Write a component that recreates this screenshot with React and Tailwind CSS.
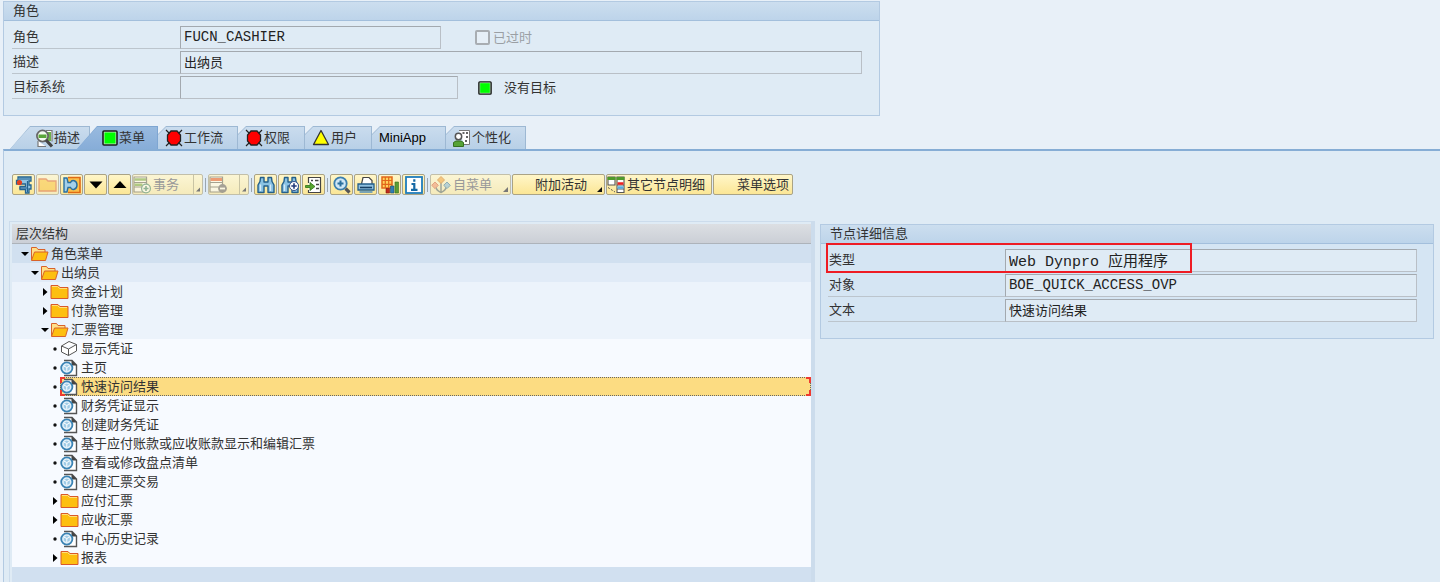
import React, { useState } from "react";
import clsx from "clsx";

// ---------- icons ----------

const Svg = ({ w = 18, h = 18, children }) => (
  <svg width={w} height={h} viewBox={`0 0 ${w} ${h}`} className="shrink-0" aria-hidden="true">
    {children}
  </svg>
);

const FolderOpen = () => (
  <Svg w={19} h={16}>
    <path d="M1.500 14V1.500h5l1.500 2h7v3" fill="#ffe08a" stroke="#d8622a" />
    <path d="M1.500 14.500 4.500 6h13.500L15.500 14.500z" fill="#fdbf10" stroke="#d8622a" />
  </Svg>
);

const FolderClosed = () => (
  <Svg w={19} h={16}>
    <path d="M1 14.500V1.500h7l2 2h8v11z" fill="#fdbf10" stroke="#d9592b" />
    <path d="M2 2.500h5.500l2 2H17" fill="none" stroke="#ffdf7e" />
  </Svg>
);

const CubeIcon = () => (
  <Svg w={19} h={17}>
    <path
      d="M1.500 6 9 1.500l7.500 3v6.500L8.500 15.500 1.500 12zM1.500 6l7 3 8-4.500M8.500 9v6.500"
      fill="#fff"
      stroke="#555"
      strokeLinejoin="round"
    />
  </Svg>
);

const WebDoc = () => (
  <Svg w={19} h={18}>
    <path d="M4 1.500h8l4.500 4.500v10.500H4" fill="#fff" stroke="#555" strokeWidth="1.400" />
    <path d="M11.500 1v5.500H17z" fill="#444" />
    <circle cx="6.800" cy="9" r="5.600" fill="#e4f1fa" stroke="#3a83b4" strokeWidth="1.800" />
    <path d="M3.800 7 6.800 5.500l3 1.500v3.500l-3 2-3-2z" fill="#9fcbe6" />
    <path d="M3.800 7l3 1.500 3-1.500M6.800 8.500v4" stroke="#fff" fill="none" />
  </Svg>
);

const GreenSquare = ({ size = 16 }) => (
  <svg width={size} height={size} viewBox="0 0 16 16" className="shrink-0" aria-hidden="true">
    <rect x="1" y="1" width="14" height="14" rx="1" fill="#bfe8bf" stroke="#1c1c1c" strokeWidth="1.600" />
    <rect x="2.500" y="2.500" width="11" height="11" fill="#0f0" />
  </svg>
);

const RedLight = () => (
  <Svg>
    <path d="M1 1l4 4M17 1l-4 4M1 17l4-4M17 17l-4-4" stroke="#222" strokeWidth="1.200" />
    <path d="M6 2h6l3.500 4v6L12 16H6l-3.500-4V6z" fill="red" stroke="#222" strokeWidth="1.300" />
  </Svg>
);

const YellowTriangle = () => (
  <Svg>
    <path d="M9 1.500 16.500 15.500h-15z" fill="#ff0" stroke="#333" strokeWidth="1.300" strokeLinejoin="round" />
  </Svg>
);

const DocSearch = () => (
  <Svg w={19} h={19}>
    <path d="M11 1.500h6v11M3 12v5.500h8" fill="#fff" stroke="#777" strokeWidth="1.200" />
    <path d="M12 3h4v9h-4z" fill="#6db04a" />
    <circle cx="7.500" cy="7" r="5.600" fill="#f4faf0" stroke="#666" strokeWidth="1.700" />
    <path d="M3.500 5.500h8v3.500h-8z" fill="#5aa63a" />
    <path d="M11 11l6 6.500" stroke="#444" strokeWidth="3.200" />
  </Svg>
);

const Personal = () => (
  <Svg>
    <path d="M6 1.500h10.500v14H11" fill="#fff" stroke="#777" />
    <path d="M9.500 4h2M13 4h2M13 8h2M12 12h2" stroke="#333" strokeWidth="1.600" />
    <circle cx="5.500" cy="7.500" r="3.200" fill="#fff" stroke="#555" strokeWidth="1.500" />
    <path d="M.5 17.500V13.500l2.500-1.500h5l2.500 1.500v4z" fill="#56a336" stroke="#35701f" />
  </Svg>
);

const RoleIcon = () => (
  <Svg>
    <path
      d="M3 1h13v4h-2v4h2v4h-2v4h-3.500v-3.500H5v-3h5.500V8H1.500V4.500H3z"
      fill="#8fc3e3"
      stroke="#24638f"
      strokeWidth="1.300"
    />
    <path d="M4 3h11M4 12h9M12.500 5v11" stroke="#24638f" strokeWidth="1.200" />
    <circle cx="4.500" cy="6.500" r="2.600" fill="#e0401f" />
  </Svg>
);

const PuzzleIcon = () => (
  <Svg>
    <path d="M5 1.500h12v15H5" fill="#fbc04a" stroke="#e06a14" strokeWidth="1.600" />
    <path
      d="M1 2h3l1 4.500h2.500c1.500-3.500 6.500-2 6.500 2.500s-5 6-6.500 2.500H5L4 16H1z"
      fill="#a4d0ea"
      stroke="#2a6f9e"
      strokeWidth="1.400"
    />
  </Svg>
);

const InsertRow = () => (
  <Svg>
    <path d="M1 1h12.500v15H1zM1 6.500h12M1 11h12" fill="#fff" stroke="#555" strokeWidth="1.200" />
    <path d="M1.500 3.500h11.500M1.500 8.800h8" stroke="#6aa13c" strokeWidth="2.500" />
    <circle cx="13" cy="12.500" r="4.400" fill="#fff" stroke="#2d7a66" strokeWidth="1.200" />
    <path d="M10.500 12.500h5M13 10v5" stroke="#2d7a66" strokeWidth="1.600" />
  </Svg>
);

const DeleteRow = () => (
  <Svg>
    <path d="M1 1h12.500v15H1zM1 6.500h12M1 11h12" fill="#fff" stroke="#555" strokeWidth="1.200" />
    <path d="M1.500 3.500h11.500" stroke="#e0481c" strokeWidth="3" />
    <circle cx="13.500" cy="12.500" r="4.400" fill="#556" />
    <path d="M11 12.500h5" stroke="#fff" strokeWidth="1.800" />
  </Svg>
);

const binocularPath =
  "M3.500 1.500h3.500V6h4V1.500h3.500l.5 4 2 3.500v7.500h-6V10h-4v6.500H1V9l2-3.500z";

const Find = () => (
  <Svg>
    <path d={binocularPath} fill="#8ac2e3" stroke="#245f8a" strokeWidth="1.400" strokeLinejoin="round" />
    <path d="M3.500 8.500V15M13.500 8.500V15" stroke="#d6ebf7" strokeWidth="1.300" />
  </Svg>
);

const FindNext = () => (
  <Svg>
    <path d={binocularPath} fill="#8ac2e3" stroke="#245f8a" strokeWidth="1.400" strokeLinejoin="round" />
    <path d="M3.500 8.500V15" stroke="#d6ebf7" strokeWidth="1.300" />
    <circle cx="13" cy="10" r="4.500" fill="#fff" stroke="#33518a" />
    <path d="M10.300 10h5.400M13 7.300v5.400" stroke="#233c7a" strokeWidth="1.600" />
  </Svg>
);

const Goto = () => (
  <Svg>
    <path d="M3.500 7V1.500h12v15h-12V14" fill="#fff" stroke="#444" strokeWidth="1.200" />
    <path d="M6 4.500h2M10 4.500h3.500M11 8.500h3M11 12.500h3" stroke="#444" strokeWidth="1.300" />
    <path d="M.5 9.500H5v-3l5 4-5 4v-3H.5z" fill="#57a52f" stroke="#2f7415" strokeWidth=".8" />
  </Svg>
);

const ZoomPlus = () => (
  <Svg>
    <circle cx="7.500" cy="7.500" r="6.200" fill="#cfe6f5" stroke="#3c7fae" strokeWidth="1.800" />
    <path d="M4.500 7.500h6M7.500 4.500v6" stroke="#2a6f9e" strokeWidth="2" />
    <path d="M12.500 12.500l4 4" stroke="#555" strokeWidth="3.200" />
  </Svg>
);

const PrinterIcon = () => (
  <Svg>
    <path d="M4.500 8 6 1.500h6L15 4.500V8" fill="#fff" stroke="#444" strokeWidth="1.200" />
    <path d="M1 8h16v6H1z" fill="#8fc0e0" stroke="#245f8a" strokeWidth="1.300" />
    <path d="M3 11.500h12" stroke="#173f63" strokeWidth="1.600" />
    <path d="M2.500 16h13" stroke="#5b93bb" strokeWidth="1.600" />
  </Svg>
);

const GraphIcon = () => (
  <Svg>
    <path d="M1 1h10v11H1z" fill="#ffd25a" stroke="#e2661a" strokeWidth="1.500" />
    <path d="M1 4.500h10M1 8.300h10M4.300 1v11M7.700 1v11" stroke="#e2661a" strokeWidth="1.200" />
    <path d="M5 12.500h3.500V17H5z" fill="#c02a1c" stroke="#7f170d" strokeWidth=".6" />
    <path d="M9.500 10h3.500v7H9.500z" fill="#2f7db3" stroke="#174d75" strokeWidth=".6" />
    <path d="M14 6h3.500v11H14z" fill="#5a9c34" stroke="#35701f" strokeWidth=".6" />
  </Svg>
);

const InfoIcon = () => (
  <Svg>
    <rect x="1" y="1" width="16" height="16" fill="#fff" stroke="#1f7dbd" strokeWidth="1.800" />
    <path d="M9.300 3.300v2.500M6.500 8h2.800v5.500M6 13.800h6.500" stroke="#1669a5" strokeWidth="2.200" fill="none" />
  </Svg>
);

const SelfMenu = () => (
  <Svg w={20} h={18}>
    <path d="M10 5v11M5 11c0 3 2 4 5 5.500 3-1.500 5-2.500 5-5.500" fill="none" stroke="#4a5f70" strokeWidth="1.500" />
    <path d="M10 .5 13.500 4 10 7.500 6.500 4z" fill="#f09a30" stroke="#c86a10" />
    <path d="M4 6l3.300 3.300L4 12.600.7 9.300z" fill="#f08a6a" stroke="#d05a3a" />
    <path d="M16 6l3.300 3.300-3.300 3.300-3.300-3.300z" fill="#7ab4e0" stroke="#2a6f9e" />
  </Svg>
);

const NodeDetail = () => (
  <Svg>
    <path d="M1 1h7v8H1zM10 1h7v15.500h-7zM10 9h7M10 13h7" fill="#fff" stroke="#555" strokeWidth="1.100" />
    <path d="M.5 2.500H8.500M9.500 2.500h8" stroke="#4f9a2a" strokeWidth="3" />
    <path d="M10.500 7.500h6" stroke="#f02020" strokeWidth="2.500" />
    <path d="M10.500 11.500h6" stroke="#58aee0" strokeWidth="2.500" />
    <path d="M1 11.500l7 4.500" stroke="#555" strokeDasharray="2 1.500" />
  </Svg>
);

const Down = () => (
  <Svg>
    <path d="M2.500 5.500h13L9 12.500z" fill="#000" />
  </Svg>
);

const Up = () => (
  <Svg>
    <path d="M2.500 12h13L9 5z" fill="#000" />
  </Svg>
);

const ButtonFolder = () => (
  <Svg w={19} h={16}>
    <path d="M1 14V2h7l2 2h8v10z" fill="#fbc02c" stroke="#d9592b" strokeWidth="1.300" />
  </Svg>
);

// ---------- form pieces ----------

const fieldClass =
  "h-[23px] min-w-0 border border-[#b9bfc6] border-t-[#a3a9af] border-l-[#a3a9af] bg-[#dfebf5] px-[3px] pb-[2px] text-[#222] outline-none";

const monoClass = "font-['Liberation_Mono','Noto_Sans_CJK_SC',monospace]";

const Label = ({ id, wide, children }) => (
  <label
    htmlFor={id}
    className={clsx(
      "flex h-[23px] shrink-0 items-center border-b border-[#bcc5cd] pl-px",
      wide ? "w-[177px]" : "w-[168px]"
    )}
  >
    {children}
  </label>
);

const GroupTitle = ({ children }) => (
  <h2 className="flex h-[19px] items-center border-b border-[#a3bfdc] bg-linear-to-b from-[#ccdeef] to-[#bdd4ea] pl-[9px]">
    {children}
  </h2>
);

// ---------- tabs ----------

const tabs = [
  { id: "desc", label: "描述", icon: <DocSearch />, width: "w-[80px]", first: true },
  { id: "menu", label: "菜单", icon: <GreenSquare />, width: "w-[81px]" },
  { id: "workflow", label: "工作流", icon: <RedLight />, width: "w-[80px]" },
  { id: "auth", label: "权限", icon: <RedLight />, width: "w-[67px]" },
  { id: "user", label: "用户", icon: <YellowTriangle />, width: "w-[67px]" },
  { id: "miniapp", label: "MiniApp", width: "w-[74px]" },
  { id: "personal", label: "个性化", icon: <Personal />, width: "w-[80px]" },
];

const Tab = ({ tab, active, onSelect }) => {
  const slope =
    tab.first || active
      ? "[clip-path:polygon(20px_0,100%_0,100%_100%,0_100%)]"
      : "[clip-path:polygon(8px_0,100%_0,100%_100%,0_100%,0_8px)]";

  return (
    <button
      type="button"
      role="tab"
      aria-selected={active}
      onClick={() => onSelect(tab.id)}
      className={clsx(
        "h-[23px] shrink-0 pt-px pr-px",
        tab.width,
        slope,
        active ? "relative -ml-[13px] bg-[#7ea6d2]" : "bg-[#9db8d3]"
      )}
    >
      <span
        className={clsx(
          "flex h-full items-center",
          slope,
          tab.first || active ? "pl-[25px]" : "pl-[7px]",
          !tab.first && "gap-px",
          active
            ? "bg-linear-to-b from-[#98badf] to-[#87add8]"
            : "bg-linear-to-b from-[#cadcee] to-[#b8d0e7]"
        )}
      >
        {tab.icon}
        <span className={clsx(!tab.icon && "text-black")}>{tab.label}</span>
      </span>
    </button>
  );
};

// ---------- toolbar ----------

const ToolButton = ({ icon, label, title, width = "w-[23px]", split, menu, disabled, end }) => (
  <button
    type="button"
    title={title}
    aria-label={title}
    disabled={disabled}
    className={clsx(
      "flex h-[21px] shrink-0 rounded-xs border bg-linear-to-b",
      disabled
        ? "border-[#c2bfa9] from-[#fbf5d4] to-[#f5ebbb] text-[#999]"
        : "border-[#aaa385] from-[#fff6c8] to-[#fbe695] text-[#333]",
      width
    )}
  >
    <span
      className={clsx(
        "flex h-full flex-1 items-center gap-[2px]",
        !label && !split && "justify-center",
        end && "justify-end",
        end && (menu ? "pr-2" : "pr-[3px]")
      )}
    >
      {icon && <span className={clsx(disabled && "opacity-50")}>{icon}</span>}
      {label && <span className="whitespace-nowrap">{label}</span>}
    </span>
    {(split || menu) && (
      <span
        className={clsx(
          "flex h-full w-[9px] items-end justify-end p-[2px]",
          split && "border-l border-[#c9c4a4]"
        )}
      >
        <svg width="5" height="5" viewBox="0 0 5 5" aria-hidden="true">
          <path d="M5 0v5H0z" fill={disabled ? "#777" : "#111"} />
        </svg>
      </span>
    )}
  </button>
);

const Separator = () => <span className="mx-px h-[14px] w-px shrink-0 bg-[#9aa5b0]" />;

const Toolbar = () => (
  <div role="toolbar" className="flex items-center gap-px">
    <ToolButton title="分配角色" icon={<RoleIcon />} />
    <ToolButton title="创建文件夹" icon={<ButtonFolder />} disabled />
    <ToolButton title="组合" icon={<PuzzleIcon />} />
    <ToolButton title="下移" icon={<Down />} />
    <ToolButton title="上移" icon={<Up />} />
    <ToolButton title="添加事务" icon={<InsertRow />} label="事务" width="w-[71px]" split disabled />
    <Separator />
    <ToolButton title="删除节点" icon={<DeleteRow />} width="w-[41px]" split disabled />
    <Separator />
    <ToolButton title="查找" icon={<Find />} />
    <ToolButton title="查找下一个" icon={<FindNext />} />
    <ToolButton title="转到" icon={<Goto />} />
    <Separator />
    <ToolButton title="详细" icon={<ZoomPlus />} />
    <ToolButton title="打印" icon={<PrinterIcon />} />
    <ToolButton title="图形" icon={<GraphIcon />} />
    <ToolButton title="信息" icon={<InfoIcon />} />
    <Separator />
    <ToolButton icon={<SelfMenu />} label="自菜单" width="w-[81px]" menu disabled />
    <ToolButton label="附加活动" width="w-[93px]" menu end />
    <ToolButton icon={<NodeDetail />} label="其它节点明细" width="w-[106px]" />
    <ToolButton label="菜单选项" width="w-[80px]" end />
  </div>
);

// ---------- tree ----------

const nodes = [
  { level: 0, type: "open", text: "角色菜单" },
  { level: 1, type: "open", text: "出纳员" },
  { level: 2, type: "closed", text: "资金计划" },
  { level: 2, type: "closed", text: "付款管理" },
  { level: 2, type: "open", text: "汇票管理" },
  { level: 3, type: "cube", text: "显示凭证" },
  { level: 3, type: "web", text: "主页" },
  { level: 3, type: "web", text: "快速访问结果" },
  { level: 3, type: "web", text: "财务凭证显示" },
  { level: 3, type: "web", text: "创建财务凭证" },
  { level: 3, type: "web", text: "基于应付账款或应收账款显示和编辑汇票" },
  { level: 3, type: "web", text: "查看或修改盘点清单" },
  { level: 3, type: "web", text: "创建汇票交易" },
  { level: 3, type: "closed", text: "应付汇票" },
  { level: 3, type: "closed", text: "应收汇票" },
  { level: 3, type: "web", text: "中心历史记录" },
  { level: 3, type: "closed", text: "报表" },
];

const levelBg = ["bg-[#d1e0f0]", "bg-[#e1ebf7]", "bg-[#ecf3fb]", "bg-[#f7faff]"];

const nodeIcons = {
  open: <FolderOpen />,
  closed: <FolderClosed />,
  cube: <CubeIcon />,
  web: <WebDoc />,
};

const Marker = ({ type }) => (
  <svg width="10" height="10" viewBox="0 0 10 10" className="shrink-0" aria-hidden="true">
    {type === "open" && <path d="M1 3h8L5 7z" fill="#000" />}
    {type === "closed" && <path d="M3 1v8l4.500-4z" fill="#000" />}
    {(type === "cube" || type === "web") && <circle cx="5" cy="5" r="1.700" fill="#111" />}
  </svg>
);

const Corners = () => (
  <>
    <span className="absolute top-0 left-0 h-[6px] w-[5px] border-t-2 border-l-2 border-[#ee3a30]" />
    <span className="absolute bottom-0 left-0 h-[6px] w-[5px] border-b-2 border-l-2 border-[#ee3a30]" />
    <span className="absolute top-0 right-0 h-[6px] w-[5px] border-t-2 border-r-2 border-[#ee3a30]" />
    <span className="absolute right-0 bottom-0 h-[6px] w-[5px] border-r-2 border-b-2 border-[#ee3a30]" />
  </>
);

const TreeRow = ({ node, selected, onSelect }) => (
  <li
    role="treeitem"
    aria-selected={selected}
    onClick={onSelect}
    className={clsx("flex h-[19px] cursor-default items-center", levelBg[node.level])}
    style={{ paddingLeft: 8 + node.level * 10 }}
  >
    <Marker type={node.type} />
    <span
      className={clsx(
        "relative flex h-[19px] flex-1 items-center gap-[2px]",
        selected && "bg-[#fcdc82] outline-1 -outline-offset-1 outline-dotted outline-[#666]"
      )}
    >
      {nodeIcons[node.type]}
      <span className="whitespace-nowrap">{node.text}</span>
      {selected && <Corners />}
    </span>
  </li>
);

// ---------- page ----------

export default function App() {
  const [activeTab, setActiveTab] = useState("menu");
  const [selected, setSelected] = useState(7);

  return (
    <div className="flex min-h-screen flex-col bg-[#e8f0f8] pt-px pl-[3px] font-['Liberation_Sans','Noto_Sans_CJK_SC',sans-serif] text-[13px] leading-[18px] text-[#333]">
      <section className="w-[61%] border border-[#b3cae2] bg-[#dfebf5] pb-[16px]">
        <GroupTitle>角色</GroupTitle>
        <div className="flex flex-col gap-[2px] pt-[5px] pr-[17px] pl-2">
          <div className="flex items-center">
            <Label id="role">角色</Label>
            <input
              id="role"
              readOnly
              defaultValue="FUCN_CASHIER"
              className={clsx(fieldClass, monoClass, "w-[261px] text-sm")}
            />
            <label className="ml-[34px] flex items-center gap-[3px] text-[#9a9fa4]">
              <input
                type="checkbox"
                disabled
                className="size-[15px] appearance-none rounded-xs border-2 border-[#a8adb2] bg-[#e6eff7]"
              />
              已过时
            </label>
          </div>
          <div className="flex items-center">
            <Label id="description">描述</Label>
            <input id="description" readOnly defaultValue="出纳员" className={clsx(fieldClass, "flex-1")} />
          </div>
          <div className="flex items-center">
            <Label id="target">目标系统</Label>
            <input id="target" readOnly defaultValue="" className={clsx(fieldClass, "w-[278px]")} />
            <span className="ml-5 flex items-center gap-3">
              <GreenSquare size={14} />
              没有目标
            </span>
          </div>
        </div>
      </section>

      <div role="tablist" className="mt-[10px] flex pl-[7px]">
        {tabs.map((tab) => (
          <Tab key={tab.id} tab={tab} active={tab.id === activeTab} onSelect={setActiveTab} />
        ))}
      </div>

      <main className="flex flex-1 flex-col border-t-2 border-l border-t-[#86add5] border-l-[#b3cae2] bg-[#dfebf5] pt-[23px] pr-[6px] pl-[5px]">
        <div className="pl-[3px]">
          <Toolbar />
        </div>

        <div className="mt-[26px] grid flex-1 grid-cols-[21fr_16fr] gap-[5px]">
          <section className="flex min-w-0 flex-col border-t border-r-4 border-l border-[#ccdcec] pt-[2px] pl-[2px]">
            <h2 className="flex h-[20px] items-center border-b border-[#adb3ba] bg-linear-to-b from-[#dcdfe3] to-[#cbcfd6] pl-1">
              层次结构
            </h2>
            <ul role="tree">
              {nodes.map((node, i) => (
                <TreeRow key={i} node={node} selected={i === selected} onSelect={() => setSelected(i)} />
              ))}
            </ul>
            <div className="min-h-[13px] flex-1 bg-[#d1e0f0]" />
          </section>

          <section className="relative mt-[3px] min-w-0 self-start border border-[#b3cae2] bg-[#d5e5f3] pb-[16px]">
            <GroupTitle>节点详细信息</GroupTitle>
            <div className="flex flex-col gap-[2px] pt-[5px] pr-[16px] pl-[7px]">
              <div className="flex">
                <Label id="node-type" wide>类型</Label>
                <input
                  id="node-type"
                  readOnly
                  defaultValue="Web Dynpro 应用程序"
                  className={clsx(fieldClass, monoClass, "flex-1 text-[15px]")}
                />
              </div>
              <div className="flex">
                <Label id="node-object" wide>对象</Label>
                <input
                  id="node-object"
                  readOnly
                  defaultValue="BOE_QUICK_ACCESS_OVP"
                  className={clsx(fieldClass, monoClass, "flex-1 text-sm")}
                />
              </div>
              <div className="flex">
                <Label id="node-text" wide>文本</Label>
                <input id="node-text" readOnly defaultValue="快速访问结果" className={clsx(fieldClass, "flex-1")} />
              </div>
            </div>
            {/* highlight around the type row */}
            <div className="pointer-events-none absolute top-[18px] left-[5px] h-[30px] w-[366px] border-2 border-[#ee1c24]" />
          </section>
        </div>
      </main>
    </div>
  );
}
